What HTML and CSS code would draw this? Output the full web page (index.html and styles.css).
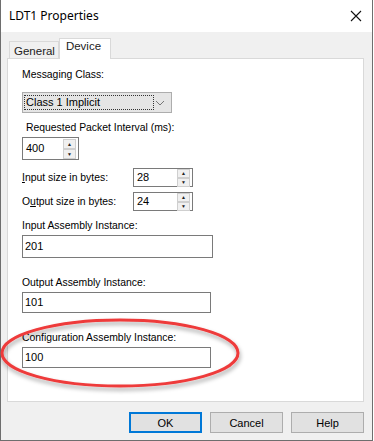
FILE: index.html
```html
<!DOCTYPE html>
<html lang="en">
<head>
    <meta charset="UTF-8">
    <title>LDT1 Properties</title>
    <link rel="stylesheet" href="styles.css">
</head>
<body>

    <div class="window">
        <div class="titlebar">
            <span class="title">LDT1 Properties</span>
            <svg class="close" width="12" height="12" viewBox="0 0 12 12">
                <path d="M1 1 L11 11 M11 1 L1 11" stroke="#111" stroke-width="1.1" fill="none"/>
            </svg>
        </div>

        <div class="body">
            <div class="tabs">
                <div class="tab">General</div>
                <div class="tab active">Device</div>
            </div>

            <div class="panel">
                <div class="label first">Messaging Class:</div>
                <div class="combo">
                    <span class="combo-text">Class 1 Implicit</span>
                    <svg class="chevron" width="10" height="6" viewBox="0 0 10 6">
                        <path d="M1 1 L5 5 L9 1" stroke="#777" stroke-width="1" fill="none"/>
                    </svg>
                </div>

                <div class="label indent">Requested Packet Interval (ms):</div>
                <div class="spin big">
                    <span class="spin-value">400</span>
                    <div class="arrows">
                        <span class="arrow">&#9650;</span>
                        <span class="arrow">&#9660;</span>
                    </div>
                </div>

                <div class="size-row first-row">
                    <span class="size-label"><u>I</u>nput size in bytes:</span>
                    <div class="spin small">
                        <span class="spin-value">28</span>
                        <div class="arrows">
                            <span class="arrow">&#9650;</span>
                            <span class="arrow">&#9660;</span>
                        </div>
                    </div>
                </div>
                <div class="size-row">
                    <span class="size-label">O<u>u</u>tput size in bytes:</span>
                    <div class="spin small">
                        <span class="spin-value">24</span>
                        <div class="arrows">
                            <span class="arrow">&#9650;</span>
                            <span class="arrow">&#9660;</span>
                        </div>
                    </div>
                </div>

                <div class="label second">Input Assembly Instance:</div>
                <div class="textbox tall">201</div>

                <div class="label gap">Output Assembly Instance:</div>
                <div class="textbox">101</div>

                <div class="label gap">Configuration Assembly Instance:</div>
                <div class="textbox">100</div>
            </div>

            <div class="buttons">
                <button class="btn default">OK</button>
                <button class="btn">Cancel</button>
                <button class="btn">Help</button>
            </div>
        </div>

        <!-- red highlight drawn over the dialog -->
        <svg class="highlight" width="250" height="80" viewBox="0 0 250 80">
            <defs>
                <filter id="shade" x="-10%" y="-20%" width="120%" height="150%">
                    <feDropShadow dx="1" dy="3" stdDeviation="2" flood-color="#000" flood-opacity="0.35"/>
                </filter>
            </defs>
            <ellipse cx="120" cy="36" rx="118" ry="33" stroke="#ee3b3b" stroke-width="3" fill="none" filter="url(#shade)"/>
        </svg>
    </div>

</body>
</html>
```

FILE: styles.css
```css
body {
    margin: 0;
    padding: 0;
    background: #fff;
    font-family: "Liberation Sans", Arial, sans-serif;
    font-size: 10.4px;
    color: #000;
}
.window {
    position: relative;
    width: 371px;
    height: 440px;
    border: 1px solid #6e6e6e;
    border-top: none;
    background: #f0f0f0;
    display: flex;
    flex-direction: column;
}
.titlebar {
    height: 32px;
    background: #fff;
    display: flex;
    align-items: center;
    justify-content: space-between;
    padding: 0 9px 0 8px;
}
.title {
    font-family: "Noto Sans", sans-serif;
    font-size: 12px;
    margin-top: -1px;
}
.close {
    margin-right: 1px;
}
.body {
    flex: 1;
    padding: 6px 8px 0 6px;
    display: flex;
    flex-direction: column;
}
.tabs {
    display: flex;
    align-items: flex-end;
    height: 20px;
    padding-left: 2px;
}
.tab {
    height: 16px;
    padding: 0 3px 0 4px;
    border: 1px solid #d9d9d9;
    border-bottom: none;
    background: #f0f0f0;
    font-family: "Liberation Sans", Arial, sans-serif;
    font-size: 11.5px;
    line-height: 18px;
    color: #222;
}
.tab.active {
    height: 20px;
    background: #fff;
    padding: 0 9px 0 6px;
    line-height: 15px;
    margin-bottom: -1px;
    position: relative;
    z-index: 1;
}
.panel {
    height: 342px;
    background: #fff;
    border: 1px solid #d9d9d9;
    padding: 0 0 0 14px;
}
.label {
    margin-top: 6px;
    height: 13px;
    line-height: 13px;
}
.label.first {
    margin-top: 9px;
}
.label.indent {
    margin-top: 8px;
    padding-left: 4px;
}
.label.second {
    margin-top: 8px;
}
.label.gap {
    margin-top: 18px;
}
.combo {
    margin-top: 11px;
    border: 1px solid #adadad;
    background: #e5e5e5;
    display: flex;
    align-items: center;
    justify-content: space-between;
    padding: 0 6px 0 2px;
    box-sizing: border-box;
    width: 150px;
    height: 21px;
}
.combo-text {
    outline: 1px dotted #333;
    padding: 0 10px 0 1px;
    line-height: 13px;
    width: 117px;
    font-size: 11px;
}
.spin {
    display: flex;
    align-items: center;
    border: 1px solid #7a7a7a;
    background: #fff;
    box-sizing: border-box;
    padding-left: 3px;
}
.spin.big {
    margin-top: 3px;
    width: 57px;
    height: 23px;
}
.spin.small {
    width: 60px;
    height: 19px;
}
.spin-value {
    flex: 1;
    line-height: 13px;
    font-size: 11px;
}
.arrows {
    display: flex;
    flex-direction: column;
    margin-right: 2px;
}
.arrow {
    width: 11px;
    height: 7px;
    background: #f0f0f0;
    border: 1px solid #cfcfcf;
    font-size: 5px;
    line-height: 7px;
    text-align: center;
    color: #222;
}
.spin.big .arrow {
    height: 8px;
    line-height: 8px;
}
.size-row {
    display: flex;
    align-items: center;
    margin-top: 5px;
}
.size-row.first-row {
    margin-top: 8px;
}
.size-label {
    width: 111px;
}
.textbox {
    margin-top: 3px;
    width: 189px;
    height: 21px;
    border: 1px solid #7a7a7a;
    box-sizing: border-box;
    padding-left: 2px;
    line-height: 19px;
    font-size: 11px;
}
.textbox.tall {
    width: 191px;
    height: 23px;
    line-height: 21px;
}
.buttons {
    display: flex;
    justify-content: flex-end;
    gap: 8px;
    margin-top: 10px;
}
.btn {
    width: 73px;
    height: 21px;
    background: #e1e1e1;
    border: 1px solid #adadad;
    font-family: "Liberation Sans", Arial, sans-serif;
    font-size: 11px;
    padding: 0;
    color: #000;
}
.btn.default {
    border: 2px solid #0078d7;
}
.highlight {
    position: absolute;
    left: -1px;
    top: 317px;
}
```
